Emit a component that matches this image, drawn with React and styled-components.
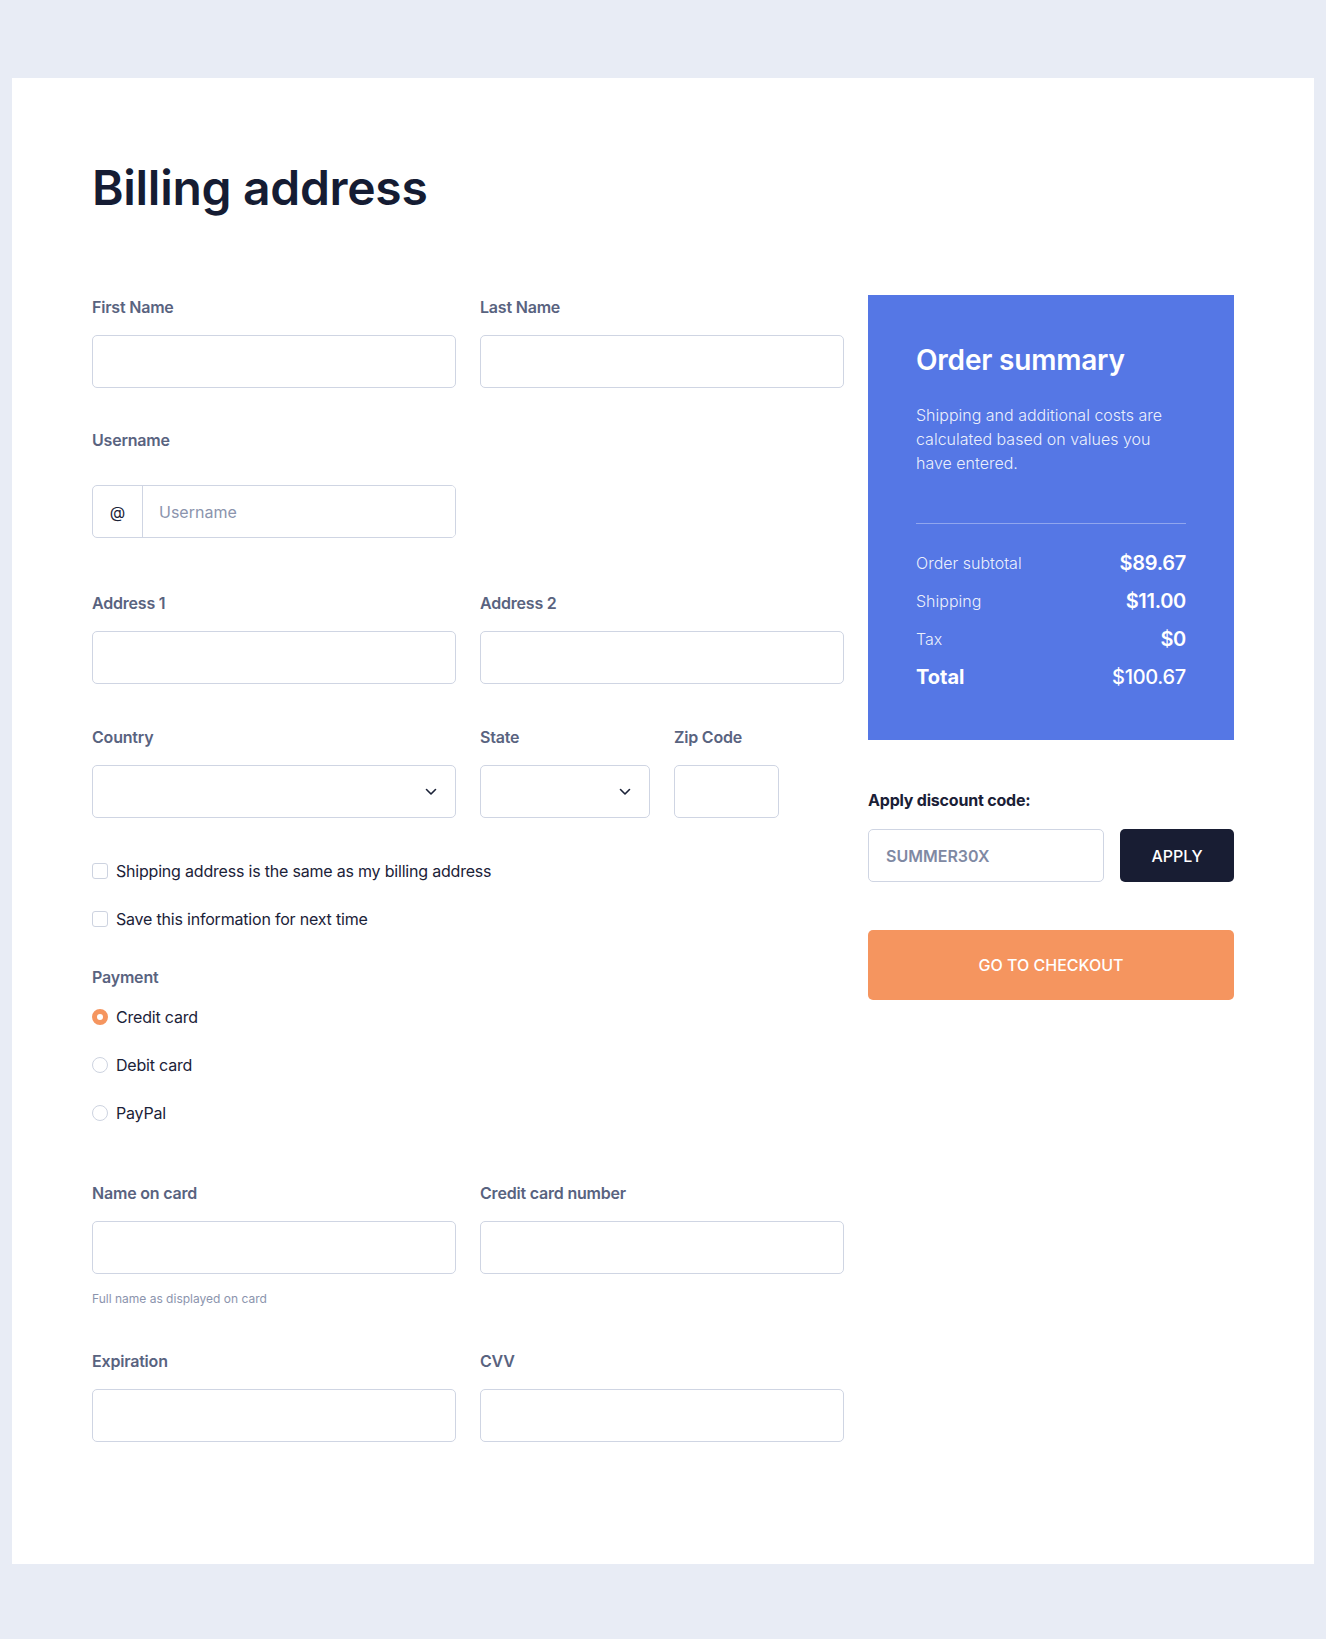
import { createGlobalStyle, styled } from 'styled-components';

const GlobalStyle = createGlobalStyle`
  *, *::before, *::after {
    box-sizing: border-box;
  }

  body {
    margin: 0;
    background-color: #e8ecf5;
    font-family: 'Inter', 'Noto Sans', sans-serif;
    color: #1b2238;
  }
`;

const Page = styled.div`
  padding: 78px 12px 76px;
`;

const Card = styled.main`
  background-color: #ffffff;
  padding: 81px 80px 122px;
`;

const Title = styled.h1`
  margin: 0 0 78px;
  font-size: 48px;
  line-height: 58px;
  font-weight: 600;
  letter-spacing: -0.3px;
  color: #151c33;
`;

const Layout = styled.div`
  display: grid;
  grid-template-columns: 752px 366px;
  gap: 24px;
  align-items: start;
`;

const Form = styled.form`
  display: flex;
  flex-direction: column;
`;

const Row = styled.div`
  display: grid;
  grid-template-columns: repeat(12, 1fr);
  column-gap: 24px;
  margin-top: ${(props) => props.$top || 0}px;
`;

const Field = styled.div`
  grid-column: span ${(props) => props.$span || 6};
  display: flex;
  flex-direction: column;
`;

const Label = styled.label`
  display: block;
  font-size: 16px;
  line-height: 24px;
  font-weight: 600;
  letter-spacing: -0.2px;
  color: #59637f;
  margin-top: ${(props) => props.$top || 0}px;
  margin-bottom: ${(props) => (props.$gap === undefined ? 16 : props.$gap)}px;
`;

const Input = styled.input`
  width: 100%;
  height: 53px;
  border: 1px solid #cfd5e3;
  border-radius: 5px;
  padding: 0 17px;
  font-family: inherit;
  font-size: 16px;
  color: #1b2238;
  background: #ffffff;
  outline: none;

  &::placeholder {
    color: #8b94ad;
  }
`;

const InputGroup = styled.div`
  display: flex;
  height: 53px;
  border: 1px solid #cfd5e3;
  border-radius: 5px;
  overflow: hidden;
`;

const Addon = styled.span`
  width: 50px;
  flex-shrink: 0;
  display: flex;
  align-items: center;
  justify-content: center;
  border-right: 1px solid #cfd5e3;
  font-size: 16px;
  color: #1b2238;
`;

const GroupInput = styled(Input)`
  height: 100%;
  border: none;
  border-radius: 0;
  padding: 0 16px;
`;

const SelectWrap = styled.div`
  position: relative;

  & svg {
    position: absolute;
    right: 19px;
    top: 50%;
    transform: translateY(-50%);
    pointer-events: none;
  }
`;

const Select = styled.select`
  width: 100%;
  height: 53px;
  border: 1px solid #cfd5e3;
  border-radius: 5px;
  background: #ffffff;
  appearance: none;
  font-family: inherit;
  font-size: 16px;
  padding: 0 17px;
  outline: none;
`;

const OptionList = styled.div`
  display: flex;
  flex-direction: column;
  gap: 24px;
  margin-top: ${(props) => props.$top || 0}px;
`;

const Option = styled.label`
  display: flex;
  align-items: center;
  gap: 8px;
  font-size: 16px;
  line-height: 24px;
  letter-spacing: -0.2px;
  color: #1b2238;
`;

const CheckBox = styled.span`
  width: 16px;
  height: 16px;
  border: 1px solid #cdd3e0;
  border-radius: 3px;
  flex-shrink: 0;
`;

const Radio = styled.span`
  width: 16px;
  height: 16px;
  border-radius: 50%;
  flex-shrink: 0;
  border: ${(props) => (props.$checked ? '5px solid #f5955f' : '1px solid #cdd3e0')};
  background: #ffffff;
`;

const Help = styled.small`
  display: block;
  margin-top: 16px;
  font-size: 12px;
  line-height: 18px;
  color: #8b94ad;
`;

const Aside = styled.aside`
  display: flex;
  flex-direction: column;
`;

const Summary = styled.section`
  background-color: #5577e5;
  color: #ffffff;
  padding: 48px 48px 49px;
`;

const SummaryTitle = styled.h2`
  margin: 0;
  font-size: 28px;
  line-height: 34px;
  font-weight: 600;
  letter-spacing: -0.2px;
`;

const SummaryText = styled.p`
  margin: 26px 0 0;
  font-size: 16px;
  line-height: 24px;
  font-weight: 300;
  color: rgba(255, 255, 255, 0.9);
`;

const Divider = styled.hr`
  margin: 48px 0 0;
  border: none;
  border-top: 1px solid rgba(255, 255, 255, 0.35);
`;

const Totals = styled.dl`
  margin: 25px 0 0;
  display: flex;
  flex-direction: column;
  gap: 10px;
`;

const TotalRow = styled.div`
  display: flex;
  justify-content: space-between;
  align-items: center;
  height: 28px;

  dt {
    font-size: ${(props) => (props.$strong ? '20px' : '16px')};
    font-weight: ${(props) => (props.$strong ? 700 : 300)};
    color: ${(props) => (props.$strong ? '#ffffff' : 'rgba(255, 255, 255, 0.9)')};
  }

  dd {
    margin: 0;
    font-size: 20px;
    font-weight: ${(props) => (props.$strong ? 500 : 600)};
    letter-spacing: -0.3px;
  }
`;

const DiscountLabel = styled.label`
  margin-top: 48px;
  font-size: 16px;
  line-height: 24px;
  font-weight: 700;
  letter-spacing: -0.2px;
  color: #1a2036;
`;

const DiscountRow = styled.div`
  display: flex;
  gap: 16px;
  margin-top: 17px;
`;

const DiscountInput = styled(Input)`
  flex: 1;
  font-weight: 600;

  &::placeholder {
    color: #7f89a3;
  }
`;

const Button = styled.button`
  border: none;
  border-radius: 5px;
  font-family: inherit;
  font-size: 16px;
  font-weight: 500;
  color: #ffffff;
  text-transform: uppercase;
  cursor: pointer;
  background-color: ${(props) => (props.$variant === 'dark' ? '#181d33' : '#f5955f')};
  width: ${(props) => (props.$variant === 'dark' ? '114px' : '100%')};
  height: ${(props) => (props.$variant === 'dark' ? '53px' : '70px')};
  margin-top: ${(props) => props.$top || 0}px;
  flex-shrink: 0;
`;

function Chevron() {
  return (
    <svg width="12" height="8" viewBox="0 0 12 8" fill="none">
      <path d="M1.5 1.5l4.5 4.5 4.5-4.5" stroke="#1b2238" strokeWidth="1.6" strokeLinecap="round" strokeLinejoin="round" />
    </svg>
  );
}

const totals = [
  { label: 'Order subtotal', value: '$89.67' },
  { label: 'Shipping', value: '$11.00' },
  { label: 'Tax', value: '$0' },
  { label: 'Total', value: '$100.67', strong: true },
];

const payments = ['Credit card', 'Debit card', 'PayPal'];

function App() {
  return (
    <Page>
      <GlobalStyle />
      <Card>
        <Title>Billing address</Title>
        <Layout>
          <Form onSubmit={(e) => e.preventDefault()}>
            <Row>
              <Field $span={6}>
                <Label>First Name</Label>
                <Input />
              </Field>
              <Field $span={6}>
                <Label>Last Name</Label>
                <Input />
              </Field>
            </Row>

            <Row $top={40}>
              <Field $span={6}>
                <Label $gap={33}>Username</Label>
                <InputGroup>
                  <Addon>@</Addon>
                  <GroupInput placeholder="Username" />
                </InputGroup>
              </Field>
            </Row>

            <Row $top={53}>
              <Field $span={6}>
                <Label>Address 1</Label>
                <Input />
              </Field>
              <Field $span={6}>
                <Label>Address 2</Label>
                <Input />
              </Field>
            </Row>

            <Row $top={41}>
              <Field $span={6}>
                <Label>Country</Label>
                <SelectWrap>
                  <Select />
                  <Chevron />
                </SelectWrap>
              </Field>
              <Field $span={3}>
                <Label>State</Label>
                <SelectWrap>
                  <Select />
                  <Chevron />
                </SelectWrap>
              </Field>
              <Field $span={2}>
                <Label>Zip Code</Label>
                <Input />
              </Field>
            </Row>

            <OptionList $top={41}>
              <Option>
                <CheckBox />
                Shipping address is the same as my billing address
              </Option>
              <Option>
                <CheckBox />
                Save this information for next time
              </Option>
            </OptionList>

            <Label $top={34} $gap={0}>Payment</Label>
            <OptionList $top={16}>
              {payments.map((name, i) => (
                <Option key={name}>
                  <Radio $checked={i === 0} />
                  {name}
                </Option>
              ))}
            </OptionList>

            <Row $top={56}>
              <Field $span={6}>
                <Label>Name on card</Label>
                <Input />
                <Help>Full name as displayed on card</Help>
              </Field>
              <Field $span={6}>
                <Label>Credit card number</Label>
                <Input />
              </Field>
            </Row>

            <Row $top={41}>
              <Field $span={6}>
                <Label>Expiration</Label>
                <Input />
              </Field>
              <Field $span={6}>
                <Label>CVV</Label>
                <Input />
              </Field>
            </Row>
          </Form>

          <Aside>
            <Summary>
              <SummaryTitle>Order summary</SummaryTitle>
              <SummaryText>
                Shipping and additional costs are calculated based on values you have entered.
              </SummaryText>
              <Divider />
              <Totals>
                {totals.map((row) => (
                  <TotalRow key={row.label} $strong={row.strong}>
                    <dt>{row.label}</dt>
                    <dd>{row.value}</dd>
                  </TotalRow>
                ))}
              </Totals>
            </Summary>

            <DiscountLabel>Apply discount code:</DiscountLabel>
            <DiscountRow>
              <DiscountInput placeholder="SUMMER30X" />
              <Button $variant="dark">Apply</Button>
            </DiscountRow>
            <Button $top={48}>Go to checkout</Button>
          </Aside>
        </Layout>
      </Card>
    </Page>
  );
}

export default App;
